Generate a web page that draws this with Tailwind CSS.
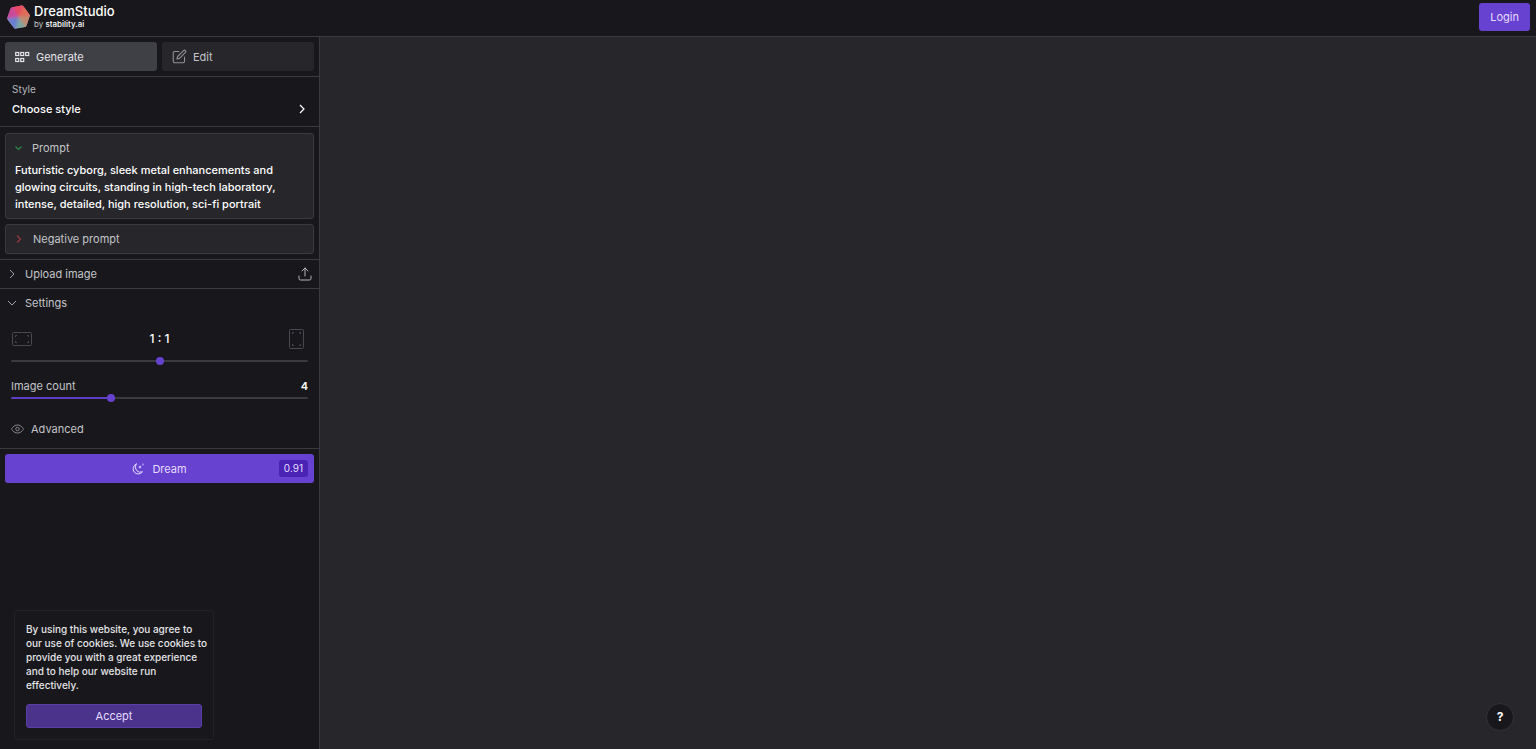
<!DOCTYPE html>
<html lang="en">
<head>
    <meta charset="UTF-8">
    <meta name="viewport" content="width=device-width, initial-scale=1.0">
    <title>DreamStudio</title>
    <script src="https://cdn.jsdelivr.net/npm/@tailwindcss/browser@4"></script>
</head>
<body class="flex flex-col h-screen overflow-hidden bg-[#18181c] text-[#c4c4c9] text-[11px] leading-4 font-[Inter,'Liberation_Sans',sans-serif]">

    <header class="flex shrink-0 items-center justify-between h-[37px] px-1.5 border-b border-[#3a3a3f]">
        <a href="#" class="flex items-center gap-1 pb-[3px]">
            <svg class="w-6 h-6" viewBox="0 0 24 24">
                <defs>
                    <clipPath id="logoShape">
                        <path d="M6.400 2.200 L15.400 0.500 Q16.800 0.300 17.600 1.400 L23.300 9.200 Q24 10.200 23.600 11.400 L20.600 20.400 Q20.200 21.600 18.900 21.900 L10 23.600 Q8.600 23.900 7.800 22.800 L1.700 14.800 Q1 13.800 1.400 12.600 L4.500 3.700 Q5 2.500 6.400 2.200 Z"/>
                    </clipPath>
                    <filter id="logoBlend" x="-20%" y="-20%" width="140%" height="140%">
                        <feGaussianBlur stdDeviation="1.600"/>
                    </filter>
                </defs>
                <g clip-path="url(#logoShape)">
                    <rect width="24" height="24" fill="#b874a0"/>
                    <g filter="url(#logoBlend)">
                        <path d="M12.500 12L0 16L0 -2L7 -2Z" fill="#c8489a"/>
                        <path d="M12.500 12L5 -2L20 -2Z" fill="#e64a62"/>
                        <path d="M12.500 12L19 -2L28 -2L28 11Z" fill="#e06a54"/>
                        <path d="M12.500 12L28 10L28 26L20 24Z" fill="#c08a70"/>
                        <path d="M12.500 12L21 24L18 28L8 28Z" fill="#7aa8a0"/>
                        <path d="M12.500 12L9 28L-2 28L-2 14Z" fill="#6a80d0"/>
                    </g>
                </g>
            </svg>
            <span class="flex flex-col">
                <span class="text-[13px] leading-[15px] font-medium text-white">DreamStudio</span>
                <span class="text-[8px] leading-[11px] text-[#c4c4c9]">by <span class="font-medium text-white">stability.ai</span></span>
            </span>
        </a>
        <button type="button" class="h-7 px-[11px] mb-0.5 rounded-[3px] bg-[#6741d0] text-[#e6dcff]">Login</button>
    </header>

    <div class="flex flex-1 min-h-0">
        <aside class="w-80 shrink-0 border-r border-[#3a3a3f]">
            <nav class="grid grid-cols-2 gap-[5px] p-[5px] border-b border-[#3a3a3f]">
                <button type="button" class="flex items-center gap-1.5 h-[29px] px-2.5 rounded-[3px] bg-[#3f3f46] text-[#e4e4e7]">
                    <svg class="w-[15px] h-3" viewBox="0 0 15 12" fill="none" stroke="currentColor" stroke-width="1.200">
                        <rect x="0.700" y="1.500" width="3" height="3"/>
                        <rect x="5.700" y="1.500" width="3" height="3"/>
                        <rect x="10.700" y="1.500" width="3" height="3"/>
                        <rect x="0.700" y="7.500" width="3" height="3"/>
                        <rect x="5.700" y="7.500" width="3" height="3"/>
                    </svg>
                    Generate
                </button>
                <button type="button" class="flex items-center gap-1.5 h-[29px] px-2.5 rounded-[3px] bg-[#27272b]">
                    <svg class="w-[15px] h-[15px]" viewBox="0 0 24 24" fill="none" stroke="#929297" stroke-width="1.7" stroke-linecap="round" stroke-linejoin="round">
                        <path d="M11 4H4a2 2 0 0 0-2 2v14a2 2 0 0 0 2 2h14a2 2 0 0 0 2-2v-7"/>
                        <path d="M18.5 2.5a2.12 2.12 0 0 1 3 3L12 15l-4 1 1-4 9.500-9.500z"/>
                    </svg>
                    Edit
                </button>
            </nav>

            <section class="border-b border-[#3a3a3f]">
                <button type="button" class="flex items-end justify-between w-full h-[49px] px-3 pb-[9px] text-left">
                    <span class="flex flex-col gap-1">
                        <span class="text-[10px] leading-4 text-[#b4b4ba]">Style</span>
                        <span class="font-medium text-white">Choose style</span>
                    </span>
                    <svg class="w-2.5 h-4" viewBox="0 0 10 16" fill="none" stroke="#fff" stroke-width="1.200">
                        <path d="M3 4l4 4-4 4"/>
                    </svg>
                </button>
            </section>

            <section class="flex flex-col gap-[5px] px-[5px] pt-1.5 pb-[5px] border-b border-[#3a3a3f]">
                <div class="h-[86px] px-[9px] pt-1.5 border border-[#3a3a3f] rounded-[3px] bg-[#27272b]">
                    <label for="prompt" class="flex items-center gap-2.5 h-4">
                        <svg class="w-[7px] h-2" viewBox="0 0 7 8" fill="none" stroke="#2b8a45" stroke-width="1.200">
                            <path d="M0.500 2.500l3 3 3-3"/>
                        </svg>
                        Prompt
                    </label>
                    <textarea id="prompt" rows="3" class="block w-full mt-1.5 resize-none overflow-hidden outline-none text-[11px] leading-[17px] font-medium text-white">Futuristic cyborg, sleek metal enhancements and glowing circuits, standing in high-tech laboratory, intense, detailed, high resolution, sci-fi portrait</textarea>
                </div>
                <button type="button" class="flex items-center gap-2.5 h-[30px] px-[9px] border border-[#3a3a3f] rounded-[3px] bg-[#27272b]">
                    <svg class="w-2 h-2" viewBox="0 0 8 8" fill="none" stroke="#98383c" stroke-width="1.200">
                        <path d="M2 0.500l3.500 3.500-3.500 3.500"/>
                    </svg>
                    Negative prompt
                </button>
            </section>

            <section class="flex items-center justify-between h-[29px] px-[7px] border-b border-[#3a3a3f]">
                <button type="button" class="flex items-center gap-2">
                    <svg class="w-2.5 h-2.5" viewBox="0 0 10 10" fill="none" stroke="#a1a1aa">
                        <path d="M3 1l4 4-4 4"/>
                    </svg>
                    Upload image
                </button>
                <button type="button" aria-label="Upload">
                    <svg class="w-3.5 h-3.5" viewBox="0 0 14 14" fill="none" stroke="#b4b4ba" stroke-linecap="round" stroke-linejoin="round">
                        <path d="M1 9v2.500a1.500 1.500 0 0 0 1.500 1.500h9a1.500 1.500 0 0 0 1.500-1.500V9M7 9V1M4 4l3-3 3 3"/>
                    </svg>
                </button>
            </section>

            <section class="h-40 border-b border-[#3a3a3f]">
                <button type="button" class="flex items-center gap-2 h-7 px-[7px]">
                    <svg class="w-2.5 h-2.5" viewBox="0 0 10 10" fill="none" stroke="#a1a1aa">
                        <path d="M1 3l4 4 4-4"/>
                    </svg>
                    Settings
                </button>
                <div class="px-[11px]">
                    <div class="flex items-center justify-between mt-3">
                        <svg class="w-[22px] h-5" viewBox="0 0 22 20" fill="none" stroke="#48484e">
                            <rect x="1.500" y="3.500" width="19" height="13" rx="1"/>
                            <path d="M4.500 8V6.500H6M16 6.500h1.500V8M4.500 12v1.500H6M16 13.500h1.500V12"/>
                        </svg>
                        <label for="ratio" class="text-[12px] font-medium text-white">1 : 1</label>
                        <svg class="w-[22px] h-5" viewBox="0 0 22 20" fill="none" stroke="#48484e">
                            <rect x="3.500" y="0.500" width="14" height="19" rx="1"/>
                            <path d="M6.500 5V3.500H8M13 3.500h1.500V5M6.500 15v1.500H8M13 16.500h1.500V15"/>
                        </svg>
                    </div>
                    <input id="ratio" type="range" min="0" max="100" value="50"
                        class="block w-full h-2 mt-2 appearance-none bg-transparent [&::-webkit-slider-runnable-track]:h-0.5 [&::-webkit-slider-runnable-track]:rounded-full [&::-webkit-slider-runnable-track]:bg-[#3a3a3f] [&::-webkit-slider-thumb]:appearance-none [&::-webkit-slider-thumb]:w-2 [&::-webkit-slider-thumb]:h-2 [&::-webkit-slider-thumb]:-mt-[3px] [&::-webkit-slider-thumb]:rounded-full [&::-webkit-slider-thumb]:bg-[#6741d0]">
                    <div class="flex justify-between mt-[13px]">
                        <label for="count">Image count</label>
                        <output for="count" class="font-semibold text-white">4</output>
                    </div>
                    <input id="count" type="range" min="1" max="10" value="4"
                        class="block w-full h-2 appearance-none bg-transparent [&::-webkit-slider-runnable-track]:h-0.5 [&::-webkit-slider-runnable-track]:rounded-full [&::-webkit-slider-runnable-track]:bg-[linear-gradient(to_right,#5f3dc4_34%,#3a3a3f_34%)] [&::-webkit-slider-thumb]:appearance-none [&::-webkit-slider-thumb]:w-2 [&::-webkit-slider-thumb]:h-2 [&::-webkit-slider-thumb]:-mt-[3px] [&::-webkit-slider-thumb]:rounded-full [&::-webkit-slider-thumb]:bg-[#6741d0]">
                    <button type="button" class="flex items-center gap-[7px] mt-[19px]">
                        <svg class="w-[13px] h-3" viewBox="0 0 26 24" fill="none" stroke="#929297" stroke-width="1.800" stroke-linejoin="round">
                            <path d="M1 12s4-8 12-8 12 8 12 8-4 8-12 8S1 12 1 12z"/>
                            <circle cx="13" cy="12" r="3.500"/>
                        </svg>
                        Advanced
                    </button>
                </div>
            </section>

            <div class="p-[5px]">
                <button type="button" class="relative flex items-center justify-center gap-2 w-full h-[29px] rounded-[3px] bg-[#6741d0] text-[#e6dcff]">
                    <svg class="w-3 h-3" viewBox="0 0 12 12" fill="none" stroke="currentColor" stroke-linejoin="round" stroke-linecap="round">
                        <path d="M4.200 1A5.200 5.200 0 1 0 10.500 8.800 5.200 5.200 0 0 1 4.200 1z"/>
                        <path d="M8 3v2M7 4h2M11 1v1" stroke-width="0.900"/>
                    </svg>
                    Dream
                    <span class="absolute right-1.5 top-1.5 px-[5px] rounded-[3px] bg-[#4a23b5] text-[10px] leading-[17px]">0.91</span>
                </button>
            </div>
        </aside>

        <main class="flex-1 bg-[#27272b]"></main>
    </div>

    <div role="dialog" aria-label="Cookies" class="fixed left-3.5 bottom-[9px] w-[200px] p-[11px] border border-[#222226] rounded-[3px] bg-[#18181c]">
        <p class="text-[10px] leading-[14px] font-medium text-[#e4e4e7] whitespace-nowrap">
            By using this website, you agree to<br>
            our use of cookies. We use cookies to<br>
            provide you with a great experience<br>
            and to help our website run<br>
            effectively.
        </p>
        <button type="button" class="w-full h-6 mt-3 border border-[#5a3fa8] rounded-[3px] bg-[#4b338c] text-[#e6dcff]">Accept</button>
    </div>

    <button type="button" aria-label="Help" class="fixed right-[22px] bottom-[18px] w-7 h-7 border border-[#323236] rounded-full bg-[#18181c] text-[12px] font-bold text-white">?</button>

</body>
</html>
